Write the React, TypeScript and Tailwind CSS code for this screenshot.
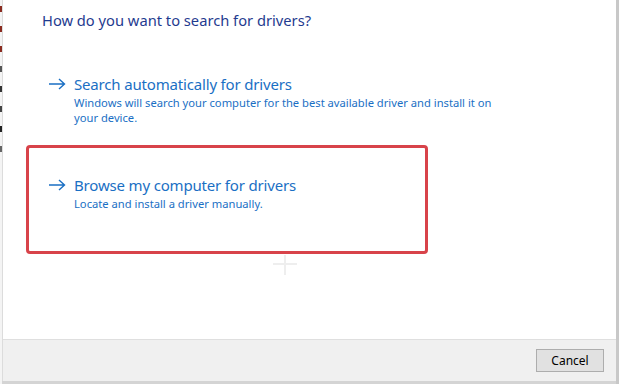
import React from 'react';

const Arrow = () => (
  <svg width="18" height="12" viewBox="0 0 18 12" fill="none" className="shrink-0">
    <path d="M1 6h15.5M11 1l5.5 5-5.5 5" stroke="#1a6fc4" strokeWidth="1.4" />
  </svg>
);

type Option = { title: string; lines: string[] };

const CommandLink: React.FC<Option> = ({ title, lines }) => (
  <div className="flex flex-col">
    <div className="flex items-center h-[22px]">
      <div className="w-[26px] flex items-center">
        <Arrow />
      </div>
      <span className="text-[15px] leading-[22px] tracking-[-0.17px] text-[#1a6fc4]">{title}</span>
    </div>
    <div className="pl-[26px] text-[11.2px] leading-[15px] text-[#1a6fc4]">
      {lines.map((l) => (
        <p key={l}>{l}</p>
      ))}
    </div>
  </div>
);

const marks = ['#8a2b1f', '#8a2b1f', '#8a2b1f', '#555', '#333', '#444', '#222', '#666'];

export default function App() {
  return (
    <div
      className="w-[619px] h-[384px] flex bg-[#d4d4d4] overflow-hidden"
      style={{ fontFamily: '"Segoe UI", "Noto Sans", sans-serif' }}
    >
      {/* what shows of the window behind */}
      <div className="w-[2px] h-full bg-[#f4f4f4] flex flex-col gap-[14px] pt-[6px]">
        {marks.map((c, i) => (
          <div key={i} className="w-[2px] h-[6px]" style={{ background: c }} />
        ))}
      </div>

      <div className="w-[614px] h-[381px] flex flex-col bg-white border-l border-[#dcdcdc] relative">
        <h1 className="pl-[39px] pt-[10px] text-[14.7px] leading-[20px] text-[#1f3b8f]">
          How do you want to search for drivers?
        </h1>

        <div className="pl-[45px] mt-[43px]">
          <CommandLink
            title="Search automatically for drivers"
            lines={[
              'Windows will search your computer for the best available driver and install it on',
              'your device.',
            ]}
          />
        </div>

        <div className="ml-[23px] mt-[20px] w-[402px] h-[109px] border-[3px] border-[#d8434a] rounded-[4px] pl-[19px] pt-[26px]">
          <CommandLink
            title="Browse my computer for drivers"
            lines={['Locate and install a driver manually.']}
          />
        </div>

        {/* cursor crosshair left in the capture */}
        <div className="absolute left-[270px] top-[255px] w-[24px] h-[20px] pointer-events-none">
          <div className="absolute left-0 top-[8px] w-[24px] h-[2px] bg-[#eeeeee]" />
          <div className="absolute left-[11px] top-0 w-[2px] h-[20px] bg-[#eeeeee]" />
        </div>

        <div className="mt-auto h-[42px] bg-[#f0f0f0] border-t border-[#dfdfdf] flex items-center justify-end pr-[12px]">
          <button className="w-[68px] h-[23px] bg-[#e1e1e1] border border-[#adadad] text-[12px] text-black">
            Cancel
          </button>
        </div>
      </div>

      <div className="w-[3px] h-full bg-[#c8c8c8]" />
    </div>
  );
}
